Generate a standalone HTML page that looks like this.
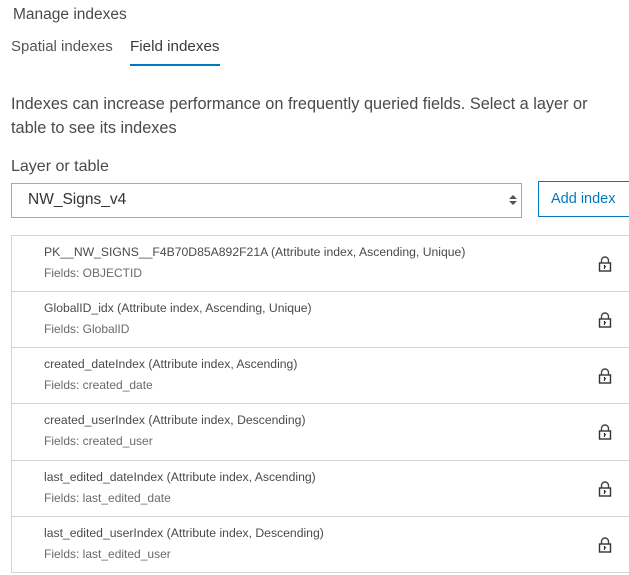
<!DOCTYPE html>
<html><head><meta charset="utf-8"><style>
*{box-sizing:border-box;margin:0;padding:0}
body{width:629px;height:575px;overflow:hidden;background:#fff;font-family:"Liberation Sans",sans-serif;color:#4a4a4a;position:relative}
.a{position:absolute;white-space:nowrap}
.row{position:absolute;left:11px;width:640px;height:57px;border:1px solid #d4d4d4;border-top:1px solid #d4d4d4}
.row .t{position:absolute;left:32px;top:9px;font-size:12.2px;color:#4a4a4a}
.row .f{position:absolute;left:32px;top:30px;font-size:12px;color:#6a6a6a}
.row svg{position:absolute;left:586px;top:20px}
</style></head><body>
<div class="a" style="left:13px;top:6px;font-size:15.5px;color:#4a4a4a">Manage indexes</div>
<div class="a" style="left:11px;top:38px;font-size:15px;color:#555">Spatial indexes</div>
<div class="a" style="left:130px;top:38px;font-size:15.2px;color:#3a3a3a">Field indexes</div>
<div class="a" style="left:130px;top:64px;width:90px;height:2px;background:#0079c1"></div>
<div class="a" style="left:11px;top:92px;font-size:16.3px;line-height:24px;color:#4a4a4a">Indexes can increase performance on frequently queried fields. Select a layer or<br>table to see its indexes</div>
<div class="a" style="left:11px;top:158px;font-size:16px;color:#4a4a4a">Layer or table</div>
<div class="a" style="left:11px;top:183px;width:511px;height:35px;border:1px solid #a8a8a8;"></div>
<div class="a" style="left:28px;top:191px;font-size:15.5px;color:#333">NW_Signs_v4</div>
<svg class="a" style="left:509px;top:194px" width="8" height="12" viewBox="0 0 8 12"><path d="M0 5L4 1L8 5Z M0 7L4 11L8 7Z" fill="#555"/></svg>
<div class="a" style="left:538px;top:181px;width:100px;height:36px;border:1px solid #0079c1"></div>
<div class="a" style="left:551px;top:191px;font-size:14.5px;color:#0079c1">Add index</div>
<div class="row" style="top:235px"><div class="t">PK__NW_SIGNS__F4B70D85A892F21A (Attribute index, Ascending, Unique)</div><div class="f">Fields: OBJECTID</div><svg width="14" height="16" viewBox="0 0 14 16"><path d="M3.5 7V4.5a3.5 3.5 0 0 1 7 0V7" fill="none" stroke="#444" stroke-width="1.4"/><rect x="1.5" y="7" width="11" height="8" fill="none" stroke="#333" stroke-width="1.4"/><path d="M6.5 9v4M6.5 10.5h1.5" stroke="#333" stroke-width="1.2"/></svg></div>
<div class="row" style="top:291px"><div class="t">GlobalID_idx (Attribute index, Ascending, Unique)</div><div class="f">Fields: GlobalID</div><svg width="14" height="16" viewBox="0 0 14 16"><path d="M3.5 7V4.5a3.5 3.5 0 0 1 7 0V7" fill="none" stroke="#444" stroke-width="1.4"/><rect x="1.5" y="7" width="11" height="8" fill="none" stroke="#333" stroke-width="1.4"/><path d="M6.5 9v4M6.5 10.5h1.5" stroke="#333" stroke-width="1.2"/></svg></div>
<div class="row" style="top:347px"><div class="t">created_dateIndex (Attribute index, Ascending)</div><div class="f">Fields: created_date</div><svg width="14" height="16" viewBox="0 0 14 16"><path d="M3.5 7V4.5a3.5 3.5 0 0 1 7 0V7" fill="none" stroke="#444" stroke-width="1.4"/><rect x="1.5" y="7" width="11" height="8" fill="none" stroke="#333" stroke-width="1.4"/><path d="M6.5 9v4M6.5 10.5h1.5" stroke="#333" stroke-width="1.2"/></svg></div>
<div class="row" style="top:403px;height:58px"><div class="t">created_userIndex (Attribute index, Descending)</div><div class="f">Fields: created_user</div><svg width="14" height="16" viewBox="0 0 14 16"><path d="M3.5 7V4.5a3.5 3.5 0 0 1 7 0V7" fill="none" stroke="#444" stroke-width="1.4"/><rect x="1.5" y="7" width="11" height="8" fill="none" stroke="#333" stroke-width="1.4"/><path d="M6.5 9v4M6.5 10.5h1.5" stroke="#333" stroke-width="1.2"/></svg></div>
<div class="row" style="top:460px"><div class="t">last_edited_dateIndex (Attribute index, Ascending)</div><div class="f">Fields: last_edited_date</div><svg width="14" height="16" viewBox="0 0 14 16"><path d="M3.5 7V4.5a3.5 3.5 0 0 1 7 0V7" fill="none" stroke="#444" stroke-width="1.4"/><rect x="1.5" y="7" width="11" height="8" fill="none" stroke="#333" stroke-width="1.4"/><path d="M6.5 9v4M6.5 10.5h1.5" stroke="#333" stroke-width="1.2"/></svg></div>
<div class="row" style="top:516px"><div class="t">last_edited_userIndex (Attribute index, Descending)</div><div class="f">Fields: last_edited_user</div><svg width="14" height="16" viewBox="0 0 14 16"><path d="M3.5 7V4.5a3.5 3.5 0 0 1 7 0V7" fill="none" stroke="#444" stroke-width="1.4"/><rect x="1.5" y="7" width="11" height="8" fill="none" stroke="#333" stroke-width="1.4"/><path d="M6.5 9v4M6.5 10.5h1.5" stroke="#333" stroke-width="1.2"/></svg></div>
</body></html>
